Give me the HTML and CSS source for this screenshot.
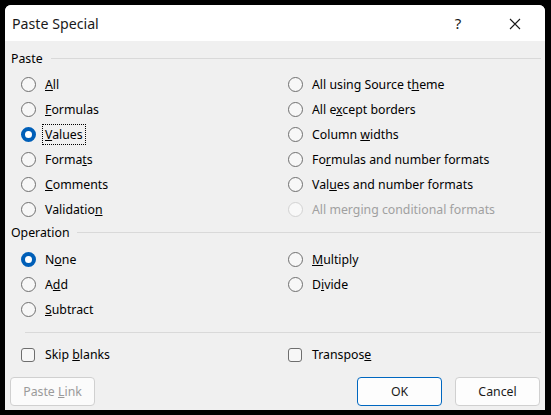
FILE: index.html
```html
<!DOCTYPE html>
<html lang="en">
<head>
  <meta charset="UTF-8" />
  <title>Paste Special</title>
  <link rel="stylesheet" href="styles.css">
</head>
<body>

<div class="dialog">
  <div class="titlebar">
    <span class="title">Paste Special</span>
    <span class="help">?</span>
    <span class="close">
      <svg width="12" height="12" viewBox="0 0 12 12"><path d="M1 1 L11 11 M11 1 L1 11" stroke="#1a1a1a" stroke-width="1.1" fill="none"/></svg>
    </span>
  </div>

  <div class="content">
    <div class="group-title"><span>Paste</span><div class="rule"></div></div>
    <div class="grid paste-grid">
      <label class="opt"><span class="radio"></span><span><u>A</u>ll</span></label>
      <label class="opt"><span class="radio"></span><span>All using Source t<u>h</u>eme</span></label>
      <label class="opt"><span class="radio"></span><span><u>F</u>ormulas</span></label>
      <label class="opt"><span class="radio"></span><span>All e<u>x</u>cept borders</span></label>
      <label class="opt"><span class="radio checked"></span><span class="focus"><u>V</u>alues</span></label>
      <label class="opt"><span class="radio"></span><span>Column <u>w</u>idths</span></label>
      <label class="opt"><span class="radio"></span><span>Forma<u>t</u>s</span></label>
      <label class="opt"><span class="radio"></span><span>Fo<u>r</u>mulas and number formats</span></label>
      <label class="opt"><span class="radio"></span><span><u>C</u>omments</span></label>
      <label class="opt"><span class="radio"></span><span>Val<u>u</u>es and number formats</span></label>
      <label class="opt"><span class="radio"></span><span>Validatio<u>n</u></span></label>
      <label class="opt disabled"><span class="radio"></span><span>All mer<u>g</u>ing conditional formats</span></label>
    </div>

    <div class="group-title op"><span>Operation</span><div class="rule"></div></div>
    <div class="grid op-grid">
      <label class="opt"><span class="radio checked"></span><span>N<u>o</u>ne</span></label>
      <label class="opt"><span class="radio"></span><span><u>M</u>ultiply</span></label>
      <label class="opt"><span class="radio"></span><span>A<u>d</u>d</span></label>
      <label class="opt"><span class="radio"></span><span>D<u>i</u>vide</span></label>
      <label class="opt"><span class="radio"></span><span><u>S</u>ubtract</span></label>
      <span></span>
    </div>

    <div class="separator"></div>

    <div class="grid check-grid">
      <label class="opt"><span class="check"></span><span>Skip <u>b</u>lanks</span></label>
      <label class="opt"><span class="check"></span><span>Transpos<u>e</u></span></label>
    </div>
  </div>

  <div class="buttons">
    <button class="btn disabled-btn">Paste <u>L</u>ink</button>
    <div class="spacer"></div>
    <button class="btn primary">OK</button>
    <button class="btn">Cancel</button>
  </div>
</div>

</body>
</html>
```

FILE: styles.css
```css
body {
  margin: 0;
  background: #000000;
  font-family: "Noto Sans", "Open Sans", sans-serif;
  font-size: 12.3px;
  color: #000000;
}

.dialog {
  margin: 5px;
  width: 540px;
  height: 405px;
  background: #f0f0f0;
  border-radius: 6px 6px 0 0;
  overflow: hidden;
  display: flex;
  flex-direction: column;
}

.titlebar {
  height: 36px;
  background: #ffffff;
  display: flex;
  align-items: center;
}

.title {
  font-size: 14.2px;
  margin-left: 7px;
  flex: 1;
  color: #1a1a1a;
}

.help {
  font-size: 15px;
  width: 24px;
  text-align: center;
  color: #1a1a1a;
  margin-right: 34px;
}

.close {
  width: 22px;
  display: flex;
  justify-content: center;
  margin-right: 19px;
  padding-top: 2px;
}

.content {
  padding: 8px 4px 0 6px;
}

.group-title {
  height: 18px;
  display: flex;
  align-items: center;
  gap: 8px;
  margin-bottom: 5px;
}

.group-title.op {
  margin-top: 1px;
  margin-bottom: 6px;
}

.rule {
  flex: 1;
  height: 1px;
  background: #d9d9d9;
}

.grid {
  display: grid;
  grid-template-columns: 267px 1fr;
  padding-left: 10px;
}

.opt {
  height: 25px;
  display: flex;
  align-items: center;
  gap: 9px;
}

.radio {
  width: 15px;
  height: 15px;
  box-sizing: border-box;
  border: 1px solid #6f6f6f;
  border-radius: 50%;
  background: #f7f7f7;
}

.radio.checked {
  border: 4.5px solid #005fb8;
  background: #ffffff;
}

.opt.disabled {
  color: #a0a0a0;
}

.opt.disabled .radio {
  border-color: #d2d2d2;
  background: #f8f8f8;
}

.focus {
  outline: 1px dotted #000000;
  outline-offset: 1px;
  padding: 0 1px;
  margin-left: -1px;
}

.separator {
  height: 1px;
  background: #d9d9d9;
  margin: 10px 0 9px 14px;
}

.check {
  width: 14px;
  height: 14px;
  box-sizing: border-box;
  border: 1px solid #6e6e6e;
  border-radius: 3px;
  background: #f7f7f7;
}

.check-grid .opt {
  gap: 10px;
}

.buttons {
  display: flex;
  gap: 13px;
  padding: 10px 5px 0 5px;
}

.spacer {
  flex: 1;
}

.btn {
  width: 85px;
  height: 29px;
  font-family: inherit;
  font-size: 12.3px;
  background: #fdfdfd;
  border: 1px solid #d0d0d0;
  border-radius: 4px;
  color: #1a1a1a;
  padding: 0;
}

.btn.primary {
  border-color: #0067c0;
}

.disabled-btn {
  color: #9a9a9a;
  background: #fbfbfb;
}
```
